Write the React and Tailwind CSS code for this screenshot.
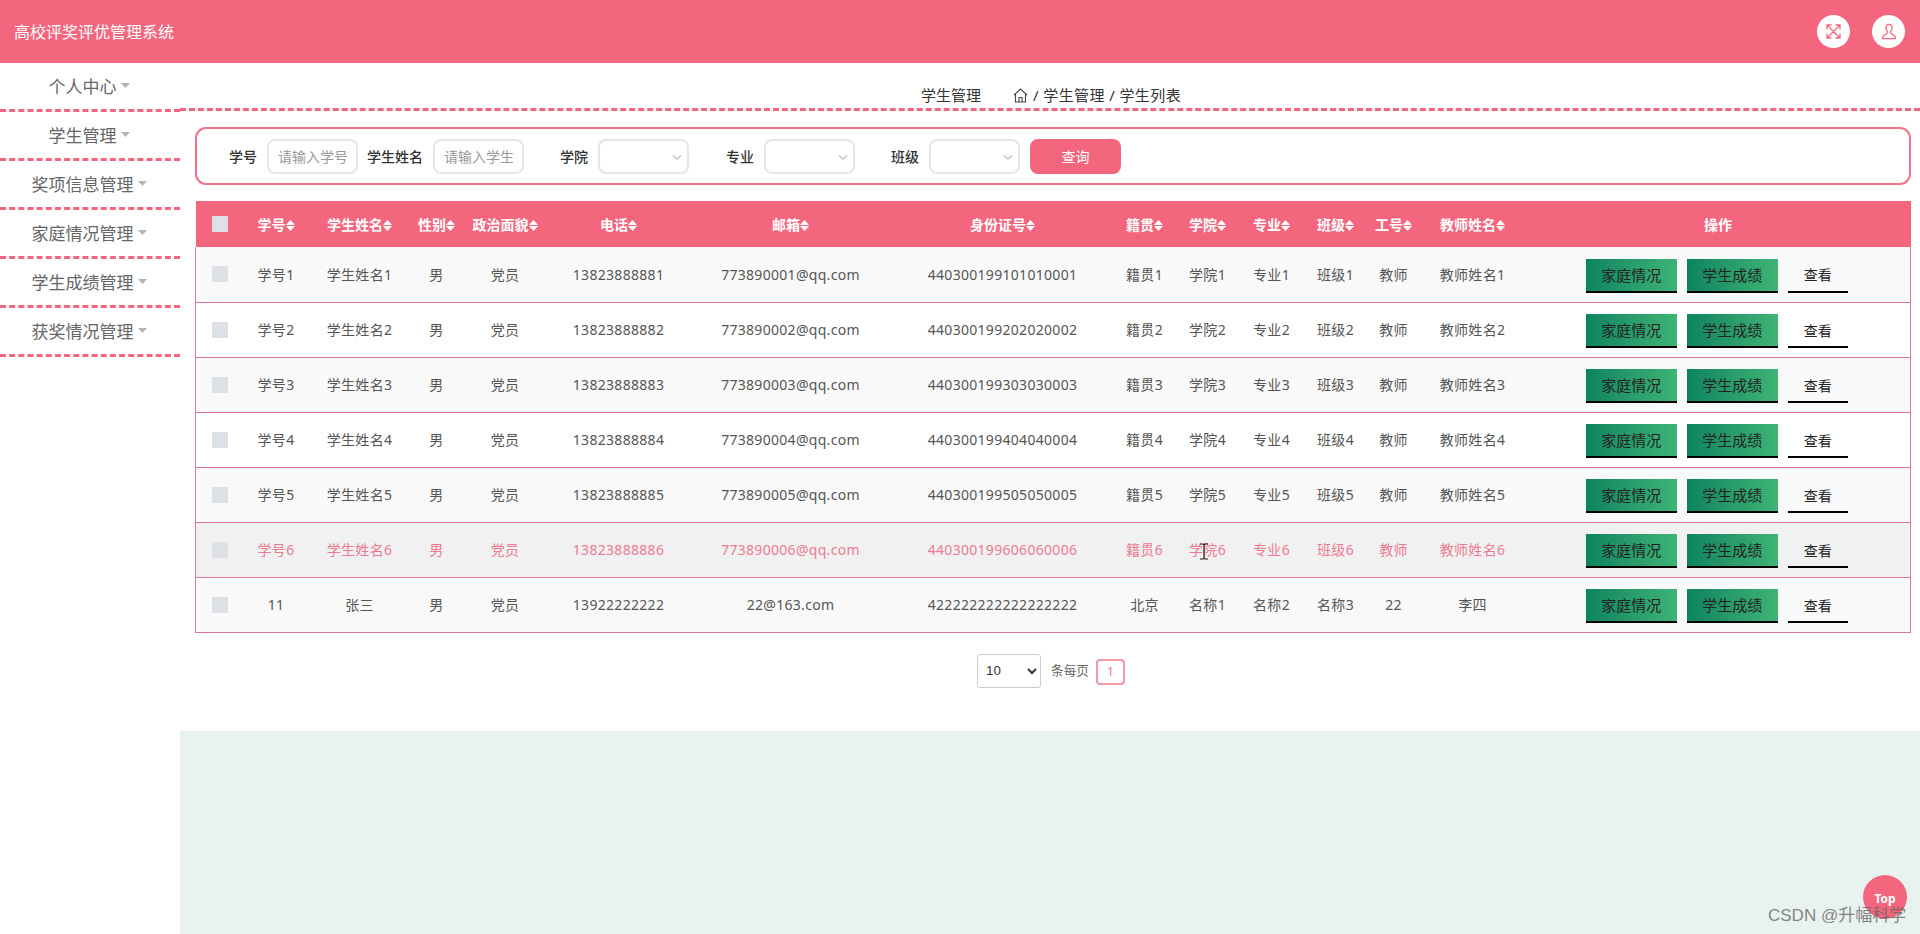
import React from "react";

const menu = ["个人中心", "学生管理", "奖项信息管理", "家庭情况管理", "学生成绩管理", "获奖情况管理"];

const columns = [
  { label: "学号", key: "no", width: "w-[65px]", sort: true },
  { label: "学生姓名", key: "name", width: "w-[102px]", sort: true },
  { label: "性别", key: "sex", width: "w-[52px]", sort: true },
  { label: "政治面貌", key: "party", width: "w-[85px]", sort: true },
  { label: "电话", key: "phone", width: "w-[142px]", sort: true },
  { label: "邮箱", key: "email", width: "w-[202px]", sort: true },
  { label: "身份证号", key: "idcard", width: "w-[222px]", sort: true },
  { label: "籍贯", key: "home", width: "w-[62px]", sort: true },
  { label: "学院", key: "college", width: "w-[64px]", sort: true },
  { label: "专业", key: "major", width: "w-[64px]", sort: true },
  { label: "班级", key: "cls", width: "w-[64px]", sort: true },
  { label: "工号", key: "workNo", width: "w-[52px]", sort: true },
  { label: "教师姓名", key: "teacher", width: "w-[106px]", sort: true },
];

const makeRow = (n, idcard) => ({
  no: `学号${n}`,
  name: `学生姓名${n}`,
  sex: "男",
  party: "党员",
  phone: `1382388888${n}`,
  email: `77389000${n}@qq.com`,
  idcard,
  home: `籍贯${n}`,
  college: `学院${n}`,
  major: `专业${n}`,
  cls: `班级${n}`,
  workNo: "教师",
  teacher: `教师姓名${n}`,
});

const rows = [
  makeRow(1, "440300199101010001"),
  makeRow(2, "440300199202020002"),
  makeRow(3, "440300199303030003"),
  makeRow(4, "440300199404040004"),
  makeRow(5, "440300199505050005"),
  makeRow(6, "440300199606060006"),
  {
    no: "11",
    name: "张三",
    sex: "男",
    party: "党员",
    phone: "13922222222",
    email: "22@163.com",
    idcard: "422222222222222222",
    home: "北京",
    college: "名称1",
    major: "名称2",
    cls: "名称3",
    workNo: "22",
    teacher: "李四",
  },
];

const SortIcon = () => (
  <svg width="9" height="11" viewBox="0 0 9 11" className="inline-block align-[-1px]">
    <path d="M4.5 0 L9 5 H0 Z M0 6 H9 L4.5 11 Z" fill="currentColor" />
  </svg>
);

const Caret = () => (
  <svg width="9" height="5" viewBox="0 0 9 5" className="ml-[4px] mb-[4px]">
    <path d="M0 0 H9 L4.5 5 Z" fill="#b4b4b4" />
  </svg>
);

const Chevron = () => (
  <svg width="12" height="12" viewBox="0 0 12 12" className="absolute right-[4px] top-[10px]" fill="none">
    <path d="M2 4.5 L6 8 L10 4.5" stroke="#c0c4cc" strokeWidth="1.5" />
  </svg>
);

const SearchSelect = ({ className }) => (
  <div className={`relative h-[35px] w-[91px] rounded-lg border-2 border-[#e6e6e6] bg-white ${className}`}>
    <select className="h-full w-full appearance-none bg-transparent outline-none"></select>
    <Chevron />
  </div>
);

const Label = ({ children, className }) => (
  <span className={`text-[14px] font-medium text-[#333] ${className}`}>{children}</span>
);

const SearchInput = ({ placeholder, className }) => (
  <input
    placeholder={placeholder}
    className={`h-[35px] w-[91px] rounded-lg border-2 border-[#e6e6e6] px-[9px] text-[14px] outline-none placeholder:text-[#999] ${className}`}
  />
);

const Checkbox = () => <div className="mx-auto h-4 w-4 bg-[#dde1e7]"></div>;

const ActionButton = ({ children }) => (
  <button className="h-[34px] w-[91px] border-b-2 border-black bg-gradient-to-r from-[#0a8460] to-[#3eb475] text-[15px] text-[#222]">
    {children}
  </button>
);

export default function App() {
  return (
    <div className="relative flex h-[934px] w-full flex-col overflow-hidden bg-white font-['Noto_Sans','Noto_Sans_CJK_SC',sans-serif]">
      {/* Header */}
      <header className="flex h-[63px] shrink-0 items-center justify-between bg-[#f4667e] pl-[14px] pr-[15px]">
        <span className="text-[16px] text-white">高校评奖评优管理系统</span>
        <div className="flex items-center gap-[22px]">
          <div className="flex h-[33px] w-[33px] items-center justify-center rounded-full bg-white">
            <svg width="15" height="15" viewBox="0 0 15 15" fill="none" stroke="#f4667e" strokeWidth="1.3">
              <path d="M1 5.5 V1 H5.5 M9.5 1 H14 V5.5 M14 9.5 V14 H9.5 M5.5 14 H1 V9.5 M1.5 1.5 L13.5 13.5 M13.5 1.5 L1.5 13.5" />
            </svg>
          </div>
          <div className="flex h-[33px] w-[33px] items-center justify-center rounded-full bg-white">
            <svg width="16" height="17" viewBox="0 0 18 20" fill="none" stroke="#f4667e" strokeWidth="1.5">
              <path d="M9 1.5 C6.6 1.5 5.4 3.4 5.4 5.6 C5.4 7.6 6.2 9.2 7.3 10.2 V11.6 C7.3 12.4 6.4 12.8 4.6 13.6 C2.6 14.5 1.5 15.4 1.5 17 V18.5 H16.5 V17 C16.5 15.4 15.4 14.5 13.4 13.6 C11.6 12.8 10.7 12.4 10.7 11.6 V10.2 C11.8 9.2 12.6 7.6 12.6 5.6 C12.6 3.4 11.4 1.5 9 1.5 Z" />
            </svg>
          </div>
        </div>
      </header>

      <div className="flex flex-1">
        {/* Sidebar */}
        <aside className="w-[180px] shrink-0">
          {menu.map((item) => (
            <div
              key={item}
              className="flex h-[49px] items-center justify-center border-b-[3px] border-dashed border-[#f4667e] pr-[2px] pt-[2px] text-[17px] text-[#666]"
            >
              {item}
              <Caret />
            </div>
          ))}
        </aside>

        <main className="flex flex-1 flex-col">
          {/* Breadcrumb */}
          <div className="flex h-[48px] items-end justify-center gap-[32px] border-b-[3px] border-dashed border-[#f4667e] pb-[2px] pl-[2px] text-[15px] leading-[22px] text-[#333]">
            <span>学生管理</span>
            <div className="flex items-center gap-[5px]">
              <svg width="15" height="15" viewBox="0 0 15 15" fill="none" stroke="#444" strokeWidth="1.1">
                <path d="M0.8 7.2 L7.5 1 L14.2 7.2 M2.5 6 V14 H12.5 V6 M6 14 V9.5 H9 V14" />
              </svg>
              <span className="tracking-[0.4px]">/ 学生管理 / 学生列表</span>
            </div>
          </div>

          <div className="ml-[15px] mr-[9px]">
            {/* Search */}
            <div className="mt-[16px] flex h-[58px] items-center rounded-[11px] border-2 border-[#f0758c] pl-[32px]">
              <Label>学号</Label>
              <SearchInput placeholder="请输入学号" className="ml-[10px]" />
              <Label className="ml-[9px]">学生姓名</Label>
              <SearchInput placeholder="请输入学生" className="ml-[10px]" />
              <Label className="ml-[36px]">学院</Label>
              <SearchSelect className="ml-[10px]" />
              <Label className="ml-[37px]">专业</Label>
              <SearchSelect className="ml-[10px]" />
              <Label className="ml-[36px]">班级</Label>
              <SearchSelect className="ml-[10px]" />
              <button className="ml-[10px] h-[35px] w-[91px] rounded-lg bg-[#f4667e] text-[14px] text-white">查询</button>
            </div>

            {/* Table */}
            <table className="mt-[16px] w-full table-fixed border-collapse text-[14px] tracking-[0.3px] text-[#555]">
              <colgroup>
                <col className="w-[48px]" />
                {columns.map((c) => (
                  <col key={c.key} className={c.width} />
                ))}
                <col />
              </colgroup>
              <thead>
                <tr className="h-[46px] bg-[#f4667e] text-white">
                  <th className="font-normal">
                    <Checkbox />
                  </th>
                  {columns.map((c) => (
                    <th key={c.key} className="whitespace-nowrap font-bold tracking-normal">
                      {c.label}
                      <SortIcon />
                    </th>
                  ))}
                  <th className="font-bold tracking-normal">操作</th>
                </tr>
              </thead>
              <tbody>
                {rows.map((row, i) => (
                  <tr
                    key={row.no}
                    className={`h-[55px] border-x border-b border-[#e0788f] ${
                      i === 5 ? "bg-[#f1f1f1] text-[#ee7a92]" : i % 2 === 0 ? "bg-[#f9f9f9]" : "bg-white"
                    }`}
                  >
                    <td>
                      <Checkbox />
                    </td>
                    {columns.map((c) => (
                      <td key={c.key} className="whitespace-nowrap text-center">
                        {row[c.key]}
                      </td>
                    ))}
                    <td className="pr-[2px] pt-[3px]">
                      <div className="flex justify-center gap-[10px] tracking-normal">
                        <ActionButton>家庭情况</ActionButton>
                        <ActionButton>学生成绩</ActionButton>
                        <button className="h-[34px] w-[60px] border-b-2 border-black text-[14px] text-[#222]">查看</button>
                      </div>
                    </td>
                  </tr>
                ))}
              </tbody>
            </table>

            {/* Pagination */}
            <div className="flex h-[98px] items-start justify-center pr-[4px] pt-[21px]">
              <select className="h-[34px] w-[64px] rounded-[3px] border border-[#ccc] bg-white pl-[4px] font-['Liberation_Sans',sans-serif] text-[13.33px] font-normal text-[#333]">
                <option>10</option>
              </select>
              <span className="ml-[10px] mt-[9px] text-[12.6px] leading-[16px] text-[#666]">条每页</span>
              <span className="ml-[7px] mt-[5px] flex h-[26px] w-[29px] items-center justify-center rounded border-2 border-[#ee9aab] text-[12px] text-[#f0708a]">
                1
              </span>
            </div>
          </div>

          <div className="flex-1 bg-[#e8f2ee]"></div>
        </main>
      </div>

      {/* Mouse cursor from the capture */}
      <svg width="10" height="17" viewBox="0 0 10 17" fill="none" stroke="#222" strokeWidth="1.2" className="absolute left-[1199px] top-[543px]">
        <path d="M1 1 H4 L5 2 L6 1 H9 M5 2 V15 M1 16 H4 L5 15 L6 16 H9" />
      </svg>

      {/* Back to top */}
      <div className="absolute left-[1863px] top-[875px] flex h-[44px] w-[44px] items-center justify-center rounded-full bg-[#f4667e] pt-[4px] text-[12px] font-bold text-white">
        Top
      </div>

      {/* Image watermark */}
      <span className="absolute left-[1768px] top-[905px] whitespace-nowrap font-['Liberation_Sans','Noto_Sans_CJK_SC',sans-serif] text-[17px] leading-[22px] text-[#666]/80">
        CSDN @升幅科学
      </span>
    </div>
  );
}
